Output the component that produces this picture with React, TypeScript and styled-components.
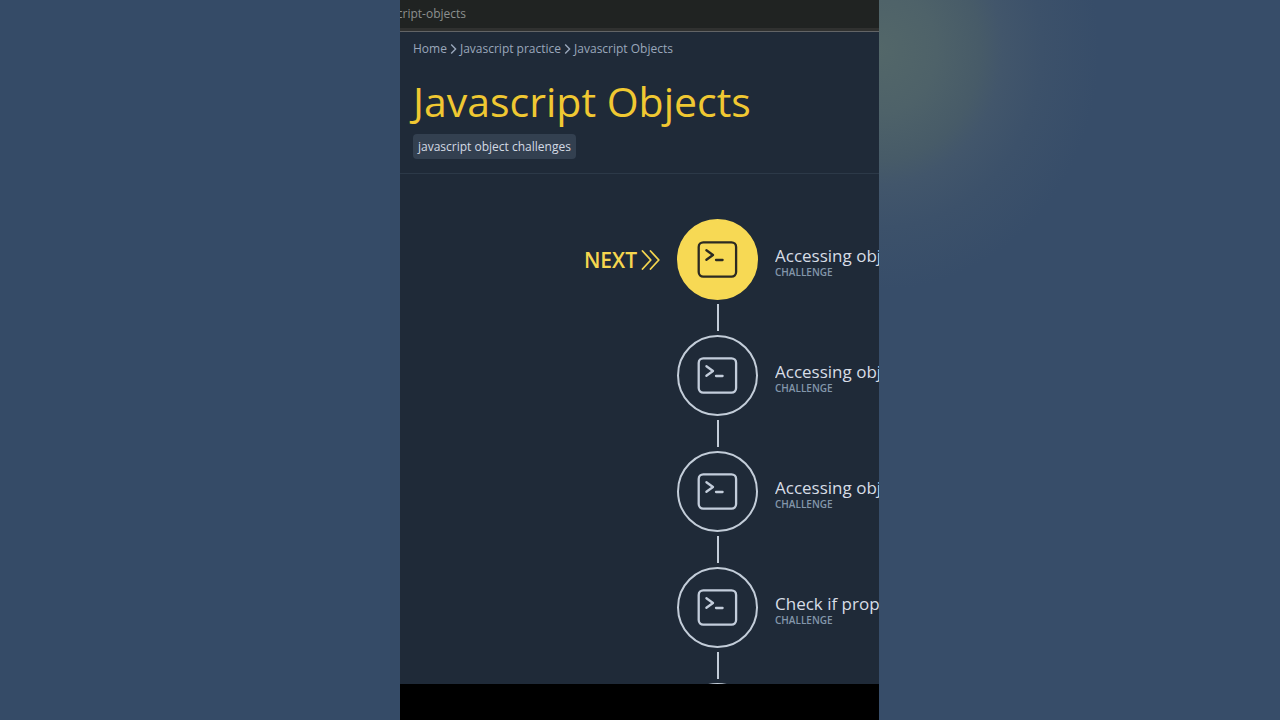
import React from "react";
import styled, { createGlobalStyle } from "styled-components";

const GlobalStyle = createGlobalStyle`
  * { box-sizing: border-box; }
  body {
    margin: 0;
    background: #354b67;
    font-family: "Open Sans", "Noto Sans", sans-serif;
  }
  a { color: inherit; text-decoration: none; }
`;

const Stage = styled.div`
  display: grid;
  grid-template-columns: 400fr 479fr 401fr;
  height: 100vh;
  overflow: hidden;
`;

const Backdrop = styled.div<{ $glow?: boolean }>`
  background: ${(p) =>
    p.$glow
      ? `radial-gradient(ellipse 220px 240px at 0 50px, #536769 0%, #4e6269 26%, #475b68 46%, #42566b 56%, #3c516a 74%, #374d69 100%)`
      : "#354b67"};
`;

const Phone = styled.div`
  display: flex;
  flex-direction: column;
  min-width: 0;
  min-height: 0;
  background: #000;
  padding-bottom: 36px;
`;

const AddressBar = styled.div`
  flex: none;
  display: flex;
  height: 32px;
  background: #202322;
  border-bottom: 1px solid #626466;
  box-shadow: inset 0 -3px 0 #303130;
`;

const Url = styled.div`
  display: flex;
  justify-content: flex-end;
  width: 66px;
  overflow: hidden;
  white-space: nowrap;
  font-size: 12px;
  line-height: 28px;
  color: #8d908f;
`;

const Screen = styled.main`
  flex: 1;
  min-height: 0;
  overflow: hidden;
  background: #1f2a38;
`;

const Header = styled.header`
  padding: 9px 13px 14px;
  border-bottom: 1px solid #2c3948;
`;

const Breadcrumbs = styled.nav`
  display: flex;
  align-items: center;
  gap: 3px;
  font-size: 12px;
  line-height: 16px;
  color: #9aa7bb;
  white-space: nowrap;
`;

const Title = styled.h1`
  margin: 14px 0 3px;
  font-size: 41px;
  font-weight: 400;
  line-height: 60px;
  color: #f0c832;
  white-space: nowrap;
`;

const Tag = styled.a`
  display: block;
  width: fit-content;
  padding: 1px 5px 0;
  border-radius: 4px;
  background: #334050;
  font-size: 12px;
  line-height: 24px;
  color: #d3dae4;
  white-space: nowrap;
`;

const Steps = styled.ol`
  list-style: none;
  margin: 0;
  padding: 45px 0 0;
`;

const Step = styled.li`
  display: grid;
  grid-template-columns: 260px 81px 1fr;
  column-gap: 17px;
  height: 116px;
`;

const Next = styled.div`
  display: flex;
  align-items: center;
  justify-content: flex-end;
  gap: 4px;
  height: 82px;
  font-size: 21px;
  font-weight: 600;
  color: #f5d64f;
`;

const Track = styled.div`
  display: flex;
  flex-direction: column;
  align-items: center;
  gap: 4px;
`;

const Circle = styled.a<{ $active?: boolean }>`
  flex: none;
  display: flex;
  align-items: center;
  justify-content: center;
  width: 81px;
  height: 81px;
  border-radius: 50%;
  border: 2px solid ${(p) => (p.$active ? "#f7d954" : "#c3cdd9")};
  background: ${(p) => (p.$active ? "#f7d954" : "transparent")};
  color: ${(p) => (p.$active ? "#2b2a22" : "#c3cddb")};
`;

const Connector = styled.div`
  width: 2px;
  height: 27px;
  background: #c3cdd9;
`;

const Caption = styled.a`
  display: block;
  padding-top: 26px;
  min-width: 0;
  overflow: hidden;
  white-space: nowrap;
`;

const CaptionTitle = styled.div`
  font-size: 17px;
  line-height: 21px;
  color: #d7dde6;
`;

const CaptionKind = styled.div`
  font-size: 10px;
  font-weight: 600;
  line-height: 12px;
  color: #8397ab;
`;

const Crumb = () => (
  <svg width="7" height="10" viewBox="0 0 7 10" fill="none" stroke="currentColor" strokeWidth="1.4" aria-hidden="true">
    <path d="M1.2 0.6 5.6 5 1.2 9.4" />
  </svg>
);

const Chevrons = () => (
  <svg width="19" height="20" viewBox="0 0 19 20" fill="none" stroke="currentColor" strokeWidth="1.8" strokeLinecap="round" strokeLinejoin="round" aria-hidden="true">
    <path d="M1.5 1 9.8 10 1.5 19M9.5 1 17.8 10 9.5 19" />
  </svg>
);

const Terminal = () => (
  <svg width="41" height="37" viewBox="0 0 41 37" fill="none" stroke="currentColor" strokeWidth="2.3" strokeLinecap="round" strokeLinejoin="round" aria-hidden="true">
    <rect x="1.7" y="1.3" width="37.4" height="34.4" rx="4.6" />
    <path d="M9.4 9.2 16 14 9.4 18.8M19 19H25.6" />
  </svg>
);

const steps = [
  { title: "Accessing obj", active: true },
  { title: "Accessing obj" },
  { title: "Accessing obj" },
  { title: "Check if prop" },
];

export default function App() {
  return (
    <>
      <GlobalStyle />
      <Stage>
        <Backdrop />
        <Phone>
          <AddressBar>
            <Url>cript-objects</Url>
          </AddressBar>
          <Screen>
            <Header>
              <Breadcrumbs aria-label="Breadcrumb">
                <a href="#home">Home</a>
                <Crumb />
                <a href="#practice">Javascript practice</a>
                <Crumb />
                <a href="#objects">Javascript Objects</a>
              </Breadcrumbs>
              <Title>Javascript Objects</Title>
              <Tag href="#challenges">javascript object challenges</Tag>
            </Header>
            <Steps>
              {steps.map((s, i) => (
                <Step key={i}>
                  <Next>
                    {s.active && (
                      <>
                        NEXT
                        <Chevrons />
                      </>
                    )}
                  </Next>
                  <Track>
                    <Circle href={`#step-${i + 1}`} $active={s.active} aria-label={s.title}>
                      <Terminal />
                    </Circle>
                    <Connector />
                  </Track>
                  <Caption href={`#step-${i + 1}`}>
                    <CaptionTitle>{s.title}</CaptionTitle>
                    <CaptionKind>CHALLENGE</CaptionKind>
                  </Caption>
                </Step>
              ))}
              <Step>
                <Next />
                <Track>
                  <Circle href="#step-5" aria-label="Challenge">
                    <Terminal />
                  </Circle>
                </Track>
              </Step>
            </Steps>
          </Screen>
        </Phone>
        <Backdrop $glow />
      </Stage>
    </>
  );
}
